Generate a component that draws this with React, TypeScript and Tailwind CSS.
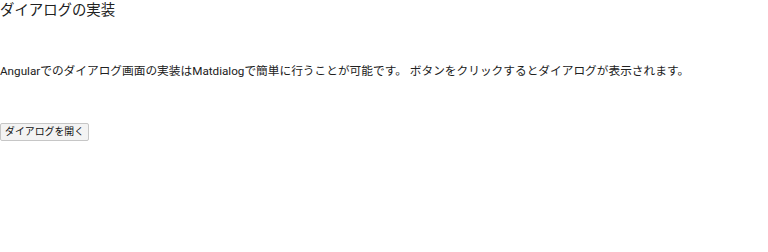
export default function App() {
  return (
    <div
      className="min-h-[252px] bg-white text-[#212121]"
      style={{ fontFamily: 'Roboto, "Noto Sans CJK JP", sans-serif' }}
    >
      <h2 className="pt-[1px] text-[14.4px] leading-[20px] font-normal">ダイアログの実装</h2>
      <p className="mt-[42px] text-[11.7px] leading-[16px]">
        Angularでのダイアログ画面の実装はMatdialogで簡単に行うことが可能です。 ボタンをクリックするとダイアログが表示されます。
      </p>
      <div className="mt-[44px] flex">
        <button className="h-[18px] rounded-[2px] border border-[#c6c6c6] bg-[#f3f3f3] px-[4px] text-[9.9px] leading-[16px] text-[#111]">
          ダイアログを開く
        </button>
      </div>
    </div>
  );
}
